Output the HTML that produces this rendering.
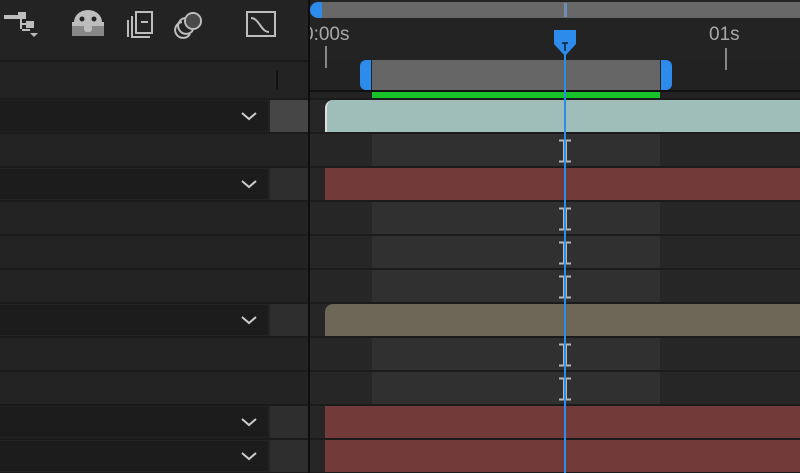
<!DOCTYPE html><html><head><style>
*{margin:0;padding:0;box-sizing:border-box}
body{width:800px;height:473px;background:#1b1b1b;position:relative;overflow:hidden;font-family:"Liberation Sans",sans-serif}
div{position:absolute}
.lrow{left:0;width:309px;height:32px;background:#232323}
.dd{left:0;width:268px;height:30px;top:1px;background:#1c1c1c}
.box{left:270px;width:39px;height:32px;top:0;background:#2e2e2e}
.chev{position:absolute;left:240px;top:10px;width:18px;height:12px}
.trow{left:310px;width:490px;height:32px;background:#262626}
.wa{left:62px;width:288px;height:32px;top:0;background:#303030}
.bar{left:15px;right:0;top:0;height:32px}
.ib{position:absolute;left:558px;width:14px;height:24px}
</style></head><body>
<div style="left:0;top:0;width:309px;height:60px;background:#232323"></div>
<svg style="position:absolute;left:0;top:0" width="309" height="60">
 <g fill="#bdbdbd">
  <rect x="4" y="15" width="14" height="4"/><rect x="18" y="12" width="8" height="7"/><rect x="20" y="19" width="2" height="10"/><rect x="20" y="23" width="8" height="2"/><rect x="26" y="21" width="8" height="7"/><rect x="22" y="29" width="8" height="2"/><polygon points="30,33 38,33 34,37"/>
  <path d="M74 22 a14 12 0 0 1 28 0 h2 v4 h-32 v-4z"/><rect x="72" y="26" width="32" height="10" fill="#888"/><rect x="84" y="22" width="8" height="10" rx="3"/>
 </g>
 <circle cx="82" cy="19" r="2.5" fill="#232323"/><circle cx="94" cy="19" r="2.5" fill="#232323"/>
 <g fill="none" stroke="#bdbdbd" stroke-width="2">
  <rect x="136" y="12" width="16" height="21"/><line x1="141" y1="22" x2="148" y2="22"/>
  <path d="M132 16 v21 h18"/><path d="M128 20 v17"/>
  <circle cx="193" cy="21" r="8"/><path d="M185 18 a8 8 0 1 0 8 12"/><path d="M182 22 a8 8 0 1 0 8 12"/>
  <rect x="247" y="12" width="28" height="24"/><path d="M251 18 c8 0 10 14 18 14"/>
 </g>
 <circle cx="193" cy="21" r="7" fill="#4a4a4a"/>
</svg>
<div style="left:0;top:62px;width:309px;height:36px;background:#232323"></div>
<div style="left:276px;top:70px;width:2px;height:20px;background:#111"></div>
<div style="left:310px;top:0;width:490px;height:98px;background:#232323;overflow:hidden">
 <div style="left:-7px;top:24px;color:#a8a8a8;font-size:19px">0:00s</div>
</div>
<div style="left:310px;top:60px;width:490px;height:32px;background:#222"></div>
<div style="left:322px;top:2px;width:478px;height:16px;background:#686868"></div>
<div style="left:310px;top:2px;width:12px;height:16px;background:#2d8ceb;border-radius:8px 0 0 8px"></div>
<div style="left:564px;top:3px;width:3px;height:14px;background:#6d8fb8"></div>
<div style="left:709px;top:24px;color:#a8a8a8;font-size:19px">01s</div>
<div style="left:325px;top:46px;width:2px;height:22px;background:#888"></div>
<div style="left:725px;top:48px;width:2px;height:22px;background:#888"></div>
<div style="left:372px;top:60px;width:288px;height:30px;background:#666"></div>
<div style="left:360px;top:60px;width:11px;height:30px;background:#2d8ceb;border-radius:6px 0 0 6px"></div>
<div style="left:661px;top:60px;width:11px;height:30px;background:#2d8ceb;border-radius:0 6px 6px 0"></div>
<div style="left:310px;top:90px;width:490px;height:2px;background:#111"></div>
<div style="left:372px;top:92px;width:288px;height:6px;background:#18c22a"></div>

<div class="lrow" style="top:100px"><div class="dd"></div><div class="box" style="background:#464646"></div><svg class="chev" viewBox="0 0 18 12"><path d="M2 3 L9 9 L16 3" fill="none" stroke="#ccc" stroke-width="2"/></svg></div>
<div class="lrow" style="top:134px"></div>
<div class="lrow" style="top:168px"><div class="dd"></div><div class="box"></div><svg class="chev" viewBox="0 0 18 12"><path d="M2 3 L9 9 L16 3" fill="none" stroke="#ccc" stroke-width="2"/></svg></div>
<div class="lrow" style="top:202px"></div>
<div class="lrow" style="top:236px"></div>
<div class="lrow" style="top:270px"></div>
<div class="lrow" style="top:304px"><div class="dd"></div><div class="box"></div><svg class="chev" viewBox="0 0 18 12"><path d="M2 3 L9 9 L16 3" fill="none" stroke="#ccc" stroke-width="2"/></svg></div>
<div class="lrow" style="top:338px"></div>
<div class="lrow" style="top:372px"></div>
<div class="lrow" style="top:406px"><div class="dd"></div><div class="box"></div><svg class="chev" viewBox="0 0 18 12"><path d="M2 3 L9 9 L16 3" fill="none" stroke="#ccc" stroke-width="2"/></svg></div>
<div class="lrow" style="top:440px"><div class="dd"></div><div class="box"></div><svg class="chev" viewBox="0 0 18 12"><path d="M2 3 L9 9 L16 3" fill="none" stroke="#ccc" stroke-width="2"/></svg></div>

<div class="trow" style="top:100px"><div class="bar" style="background:#9fbdb9;border-radius:8px 0 0 0;border-left:2px solid #ddd"></div></div>
<div class="trow" style="top:134px"><div class="wa"></div></div>
<div class="trow" style="top:168px"><div class="bar" style="background:#733a3a"></div></div>
<div class="trow" style="top:202px"><div class="wa"></div></div>
<div class="trow" style="top:236px"><div class="wa"></div></div>
<div class="trow" style="top:270px"><div class="wa"></div></div>
<div class="trow" style="top:304px"><div class="bar" style="background:#6e6657;border-radius:8px 0 0 0"></div></div>
<div class="trow" style="top:338px"><div class="wa"></div></div>
<div class="trow" style="top:372px"><div class="wa"></div></div>
<div class="trow" style="top:406px"><div class="bar" style="background:#733a3a"></div></div>
<div class="trow" style="top:440px"><div class="bar" style="background:#733a3a"></div></div>

<div style="left:308px;top:0;width:2px;height:473px;background:#0e0e0e"></div>
<div style="left:564px;top:40px;width:2px;height:433px;background:#2d8ceb"></div>
<svg style="position:absolute;left:554px;top:30px" width="22" height="27"><path d="M0 0 H22 V14 L11 26 L0 14 Z" fill="#2d8ceb"/><path d="M8 13 h6 M11 13 v8" stroke="#123" stroke-width="1.5"/></svg>
<svg class="ib" style="top:139px" viewBox="0 0 14 24"><path d="M1 1.5h12M1 22.5h12" stroke="#b8b8b8" stroke-width="2"/><path d="M7 1v22" stroke="#b8b8b8" stroke-width="4"/></svg>
<svg class="ib" style="top:207px" viewBox="0 0 14 24"><path d="M1 1.5h12M1 22.5h12" stroke="#b8b8b8" stroke-width="2"/><path d="M7 1v22" stroke="#b8b8b8" stroke-width="4"/></svg>
<svg class="ib" style="top:241px" viewBox="0 0 14 24"><path d="M1 1.5h12M1 22.5h12" stroke="#b8b8b8" stroke-width="2"/><path d="M7 1v22" stroke="#b8b8b8" stroke-width="4"/></svg>
<svg class="ib" style="top:275px" viewBox="0 0 14 24"><path d="M1 1.5h12M1 22.5h12" stroke="#b8b8b8" stroke-width="2"/><path d="M7 1v22" stroke="#b8b8b8" stroke-width="4"/></svg>
<svg class="ib" style="top:343px" viewBox="0 0 14 24"><path d="M1 1.5h12M1 22.5h12" stroke="#b8b8b8" stroke-width="2"/><path d="M7 1v22" stroke="#b8b8b8" stroke-width="4"/></svg>
<svg class="ib" style="top:377px" viewBox="0 0 14 24"><path d="M1 1.5h12M1 22.5h12" stroke="#b8b8b8" stroke-width="2"/><path d="M7 1v22" stroke="#b8b8b8" stroke-width="4"/></svg>
<div style="left:564px;top:56px;width:2px;height:417px;background:#2d8ceb"></div>
</body></html>
